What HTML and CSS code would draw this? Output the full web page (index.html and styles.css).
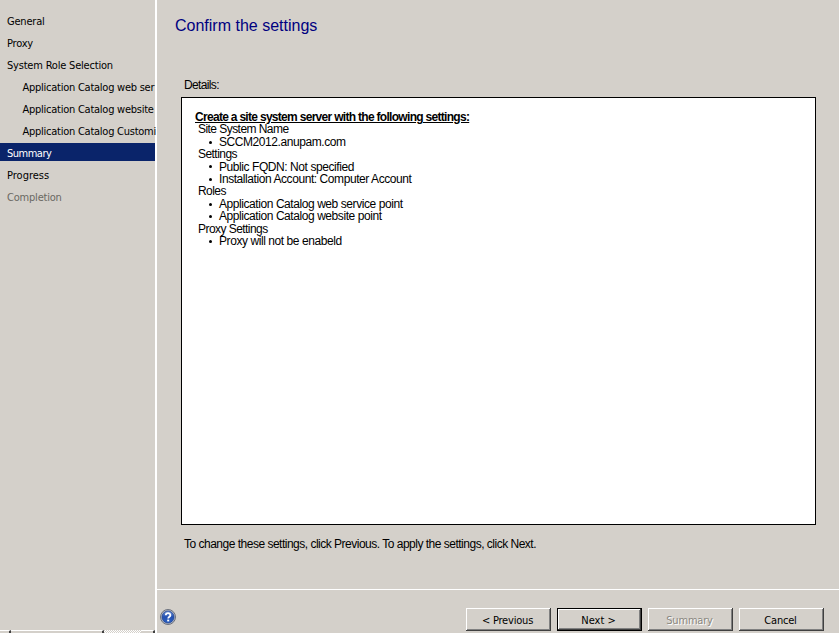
FILE: index.html
```html
<!DOCTYPE html>
<html lang="en">
<head>
    <meta charset="UTF-8">
    <meta name="viewport" content="width=device-width, initial-scale=1.0">
    <title>Confirm the settings</title>
    <link rel="stylesheet" href="styles.css">
</head>
<body>
    <div class="sidebar">
        <ul class="steps">
            <li>General</li>
            <li>Proxy</li>
            <li>System Role Selection</li>
            <li class="sub">Application Catalog web ser</li>
            <li class="sub">Application Catalog website</li>
            <li class="sub">Application Catalog Customi</li>
            <li class="active">Summary</li>
            <li class="next-step">Progress</li>
            <li class="disabled">Completion</li>
        </ul>
        <div class="scrollbar">
            <div class="scroll-left"></div>
            <div class="scroll-thumb"></div>
            <div class="scroll-track"></div>
            <div class="scroll-right"></div>
        </div>
    </div>
    <div class="main">
        <div class="content">
            <h1>Confirm the settings</h1>
            <p class="label">Details:</p>
            <div class="details">
                <h2>Create a site system server with the following settings:</h2>
                <p>Site System Name</p>
                <ul>
                    <li>SCCM2012.anupam.com</li>
                </ul>
                <p>Settings</p>
                <ul>
                    <li>Public FQDN: Not specified</li>
                    <li>Installation Account: Computer Account</li>
                </ul>
                <p>Roles</p>
                <ul>
                    <li>Application Catalog web service point</li>
                    <li>Application Catalog website point</li>
                </ul>
                <p>Proxy Settings</p>
                <ul>
                    <li>Proxy will not be enabeld</li>
                </ul>
            </div>
            <p class="hint">To change these settings, click Previous. To apply the settings, click Next.</p>
        </div>
        <div class="footer">
            <svg class="help" width="16" height="16" viewBox="0 0 16 16">
                <defs>
                    <linearGradient id="blue" x1="0" y1="0" x2="0" y2="1">
                        <stop offset="0" stop-color="#6e93d8"/>
                        <stop offset="0.5" stop-color="#2450b0"/>
                        <stop offset="1" stop-color="#2c62c4"/>
                    </linearGradient>
                </defs>
                <circle cx="8" cy="8" r="7.5" fill="#b4bac8" stroke="#6c717c" stroke-width="1"/>
                <circle cx="8" cy="8" r="6" fill="url(#blue)" stroke="#1c3f8e" stroke-width="0.7"/>
                <path d="M5.8 6.3 C5.8 3.5 10.4 3.5 10.4 6.2 C10.4 7.7 8.2 7.8 8.2 9.6" fill="none" stroke="#fff" stroke-width="1.8"/>
                <rect x="7.2" y="10.6" width="2" height="1.8" fill="#fff"/>
            </svg>
            <div class="buttons">
                <button>&lt; Previous</button>
                <button class="default">Next &gt;</button>
                <button disabled>Summary</button>
                <button>Cancel</button>
            </div>
        </div>
    </div>
</body>
</html>
```
FILE: styles.css
```css
* {
    box-sizing: border-box;
}
body {
    margin: 0;
    height: 633px;
    display: flex;
    overflow: hidden;
    background: #d4d0ca;
    color: #000;
    font-family: "DejaVu Sans Condensed", "DejaVu Sans", sans-serif;
    font-stretch: condensed;
    font-size: 11px;
}
h1, h2, p, ul {
    margin: 0;
    padding: 0;
    font-weight: normal;
    list-style: none;
}
.sidebar {
    width: 157px;
    flex: none;
    display: flex;
    flex-direction: column;
    justify-content: space-between;
    border-right: 2px solid #fff;
}
.steps {
    display: flex;
    flex-direction: column;
    gap: 4px;
    padding-top: 11px;
}
.steps li {
    height: 18px;
    padding-left: 7px;
    line-height: 21px;
    letter-spacing: -0.2px;
    white-space: nowrap;
}
.steps .sub {
    padding-left: 22.5px;
    letter-spacing: -0.25px;
}
.steps .active {
    background: #0a246a;
    color: #fff;
    letter-spacing: -0.5px;
}
.steps .next-step {
    letter-spacing: 0;
}
.steps .disabled {
    color: #6a6862;
}

/* only the top edge of the scrollbar is visible */
.scrollbar {
    display: flex;
    height: 4px;
}
.scrollbar div {
    border-top: 1px solid #fff;
    border-right: 2px solid #404040;
    margin-top: 1px;
}
.scroll-left {
    width: 11px;
}
.scroll-thumb {
    width: 93px;
}
.scrollbar .scroll-track {
    width: 37px;
    border: 0;
    background: repeating-conic-gradient(#fff 0 25%, #d4d0ca 0 50%) 0 0 / 2px 2px;
}
.scroll-right {
    width: 14px;
}

.main {
    flex: 1;
    display: flex;
    flex-direction: column;
}
.content {
    height: 589px;
    padding: 14px 23px 0 18px;
    font-family: "Liberation Sans", Arial, sans-serif;
    font-stretch: normal;
    font-size: 12px;
    letter-spacing: -0.43px;
}
.content h1 {
    height: 64px;
    color: #000080;
    font-size: 16px;
    line-height: 24px;
    letter-spacing: 0;
}
.label {
    height: 19px;
    padding-left: 9px;
    line-height: 15px;
    letter-spacing: -0.65px;
}
.details {
    width: 635px;
    height: 428px;
    margin-left: 6px;
    padding: 13px 12px;
    background: #fff;
    border: 1px solid #000;
    line-height: 12.4px;
}
.details h2 {
    padding-left: 1px;
    font-size: 12px;
    font-weight: bold;
    text-decoration: underline;
    letter-spacing: -0.7px;
}
.details p {
    padding-left: 4px;
    letter-spacing: -0.55px;
}
.details li {
    display: flex;
    align-items: center;
    padding-left: 15px;
}
.details li::before {
    content: "";
    width: 3px;
    height: 3px;
    margin-right: 7px;
    border-radius: 50%;
    background: #000;
}
.hint {
    padding: 12px 0 0 9px;
    line-height: 15px;
    letter-spacing: -0.5px;
}

.footer {
    flex: 1;
    display: flex;
    justify-content: space-between;
    align-items: flex-start;
    padding: 18px 15px 0 3px;
    border-top: 1px solid #fff;
}
.help {
    margin-top: 1px;
}
.buttons {
    display: flex;
    gap: 6px;
}
button {
    width: 85px;
    height: 23px;
    padding: 2px 2px 0 0;
    background: #d4d0ca;
    border: 0;
    box-shadow: inset -1px -1px #404040, inset 1px 1px #fff, inset -2px -2px #808080;
    color: #000;
    font: inherit;
    letter-spacing: -0.2px;
}
.default {
    box-shadow: inset 0 0 0 1px #000, inset -2px -2px #404040, inset 2px 2px #fff, inset -3px -3px #808080;
    letter-spacing: 0;
}
button:disabled {
    color: #8a8780;
    text-shadow: 1px 1px #fff;
}
```
